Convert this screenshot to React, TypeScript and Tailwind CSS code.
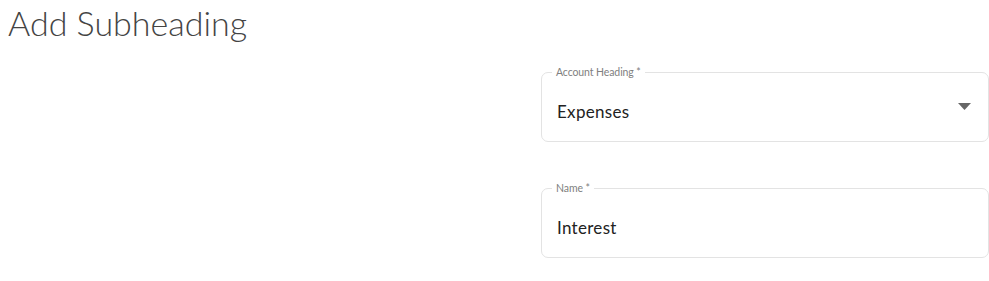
import React from 'react';

function Field({ label, value, select }: { label: string; value: string; select?: boolean }) {
  return (
    <div className="relative h-[70px] rounded-[7px] border border-[#e3e3e3] flex items-center pl-[15px] pr-[17px] pt-[10px]">
      <span className="absolute -top-[6px] left-[10px] px-[4px] bg-white text-[10.5px] leading-[11px] tracking-[-0.1px] text-[#808080]">
        {label}
      </span>
      <span className="flex-1 text-[17px] tracking-[0.3px] text-[#222]">{value}</span>
      {select && (
        <svg width="13" height="7" viewBox="0 0 13 7" className="-mt-[12px]">
          <path d="M0 0 H13 L6.5 7 Z" fill="#666" />
        </svg>
      )}
    </div>
  );
}

export default function App() {
  return (
    <div className="w-[989px] h-[281px] bg-white overflow-hidden font-['Lato',sans-serif]">
      <h1 className="pl-[8px] pt-[1px] text-[34px] leading-[44px] font-light text-[#444]">Add Subheading</h1>
      <div className="flex justify-end mt-[27px]">
        <div className="w-[448px] flex flex-col gap-[46px]">
          <Field label="Account Heading *" value="Expenses" select />
          <Field label="Name *" value="Interest" />
        </div>
      </div>
    </div>
  );
}
